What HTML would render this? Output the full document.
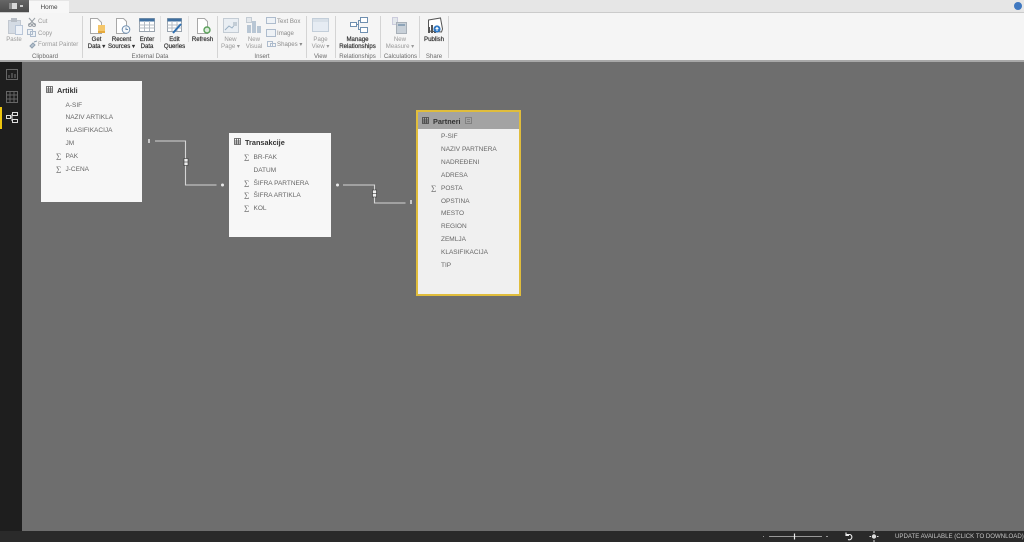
<!DOCTYPE html>
<html><head><meta charset="utf-8">
<style>
html,body{margin:0;padding:0;background:#6e6e6e}
#p{position:relative;width:1024px;height:542px;overflow:hidden;background:#6e6e6e;font-family:"Liberation Sans",sans-serif;filter:blur(.35px)}
#p div{position:absolute}
.t{white-space:nowrap;font-size:6.1px;line-height:7px;color:#555;text-align:center}
.g{color:#9a9a9a}
.b{color:#333;-webkit-text-stroke:.2px #333}
.gl{color:#6a6a6a}
.sep{width:1px;top:16px;height:42px;background:#d4d4d4}
.f{white-space:nowrap;font-size:6.5px;line-height:8px;color:#666;margin-top:1px}
.s{white-space:nowrap;font-family:"Liberation Serif",serif;font-size:9px;line-height:8px;color:#777;margin-top:1px}
.h{white-space:nowrap;font-size:7.3px;line-height:9px;font-weight:bold;color:#333;margin-top:.5px}
svg{position:absolute;overflow:visible}
</style></head><body><div id="p">
<!-- top bar -->
<div style="left:0;top:0;width:1024px;height:13px;background:#e6e6e6"></div>
<div style="left:0;top:12px;width:1024px;height:1px;background:#cbcbcb"></div>
<div style="left:0;top:0;width:29px;height:12px;background:linear-gradient(#666,#4c4c4c)"></div>
<div style="left:9px;top:3px;width:8px;height:6px;background:#d8d8d8"></div>
<div style="left:9px;top:3px;width:3px;height:6px;background:#8a8a8a"></div>
<div style="left:20px;top:5px;width:3px;height:2px;background:#ccc"></div>
<div style="left:29px;top:1px;width:40px;height:12px;background:#f7f7f7"></div>
<div class="t" style="left:29px;top:3.500px;width:40px;color:#444;font-size:6.4px">Home</div>
<div style="left:1014px;top:2px;width:8px;height:8px;border-radius:4px;background:#3f78c0"></div>
<!-- ribbon -->
<div style="left:0;top:13px;width:1024px;height:48px;background:#f5f5f5"></div>
<div style="left:0;top:60px;width:1024px;height:2px;background:#a8a8a8"></div>
<div class="sep" style="left:82px"></div><div class="sep" style="left:217px"></div><div class="sep" style="left:306px"></div><div class="sep" style="left:335px"></div><div class="sep" style="left:380px"></div><div class="sep" style="left:419px"></div><div class="sep" style="left:448px"></div>
<div class="sep" style="left:160px;height:26px;background:#e0e0e0"></div>
<div class="sep" style="left:188px;height:26px;background:#e0e0e0"></div>
<!-- ribbon icons -->
<svg style="left:0;top:0" width="1024" height="62" fill="none" stroke-width="1">
<!-- paste -->
<path d="M8.500 20.500h12v13h-12z" fill="#d4dbe4" stroke="#c2c8d0"/><path d="M11 18h6v4h-6z" fill="#b8bec6"/><path d="M15.500 25.500h7v9h-7z" fill="#eef2f8" stroke="#b9c6d8"/>
<!-- cut, copy, fp -->
<path d="M29 18l6 7M35 18l-6 7" stroke="#9aa0a6"/><circle cx="30" cy="25" r="1.500" stroke="#9aa0a6"/><circle cx="34" cy="25" r="1.500" stroke="#9aa0a6"/>
<path d="M27.500 29.500h5v5h-5zM30.500 31.500h5v5h-5z" stroke="#aebccd" fill="#eef2f6"/>
<path d="M30 46l3-3 2 2-3 3zM34 42l3-1" stroke="#8fa0b0" fill="#b8c4d0"/>
<!-- get data -->
<path d="M90.500 18.500h7l4 4v11h-11z" fill="#fff" stroke="#a8a8a8"/><path d="M98 25h7v8h-7z" fill="#f4c66a"/><path d="M98 31h7v2h-7z" fill="#e6a93c"/>
<!-- recent -->
<path d="M116.500 18.500h7l3 3v12h-10z" fill="#fff" stroke="#a8a8a8"/><circle cx="126" cy="29.500" r="3.800" fill="#f6f9fc" stroke="#6f8fb0"/><path d="M126 27.500v2h2" stroke="#6f8fb0"/>
<!-- enter -->
<path d="M139.500 18.500h15v13h-15z" fill="#fff" stroke="#9aa4ae"/><path d="M139.500 18.500h15v3h-15z" fill="#3f6fa0"/><path d="M139.500 25h15M139.500 28h15M144.500 21v10M149.500 21v10" stroke="#b5bcc4"/>
<!-- edit -->
<path d="M167.500 18.500h14v13h-14z" fill="#fff" stroke="#9aa4ae"/><path d="M167.500 18.500h14v3h-14z" fill="#3f6fa0"/><path d="M167.500 25h14M167.500 28h14M172 21v10M177 21v10" stroke="#b5bcc4"/><path d="M173 33l8-9" stroke="#2f6fb0" stroke-width="2"/>
<!-- refresh -->
<path d="M197.500 18.500h7l3 3v12h-10z" fill="#fff" stroke="#a8a8a8"/><circle cx="207" cy="30" r="3" stroke="#5aa05a" fill="#dcecdc" stroke-width="1.400"/>
<!-- new page -->
<path d="M223.500 18.500h15v14h-15z" fill="#e9eef3" stroke="#c4ccd4"/><path d="M225 30l4-4 3 2 4-5" stroke="#9ab0c4"/><path d="M233 22h4v4h-4z" fill="#c3cdd6"/>
<!-- new visual -->
<path d="M246.500 17.500h5v5h-5z" fill="#e4e8ec" stroke="#c4ccd4"/><path d="M247 25h4v8h-4zM252 21h4v12h-4zM257 26h4v7h-4z" fill="#b8c6d4"/>
<!-- textbox image shapes -->
<path d="M266.500 17.500h9v6h-9z" fill="#eef2f6" stroke="#aebccd"/><path d="M266.500 29.500h9v7h-9z" fill="#eef2f6" stroke="#aebccd"/><path d="M267.500 41.500h5v5h-5zM270.500 43.500h5v3h-5z" stroke="#aebccd"/>
<!-- page view -->
<path d="M312.500 18.500h16v13h-16z" fill="#e6ecf3" stroke="#c3ced9"/><path d="M313 19h15v3h-15z" fill="#d8e0e8"/>
<!-- manage rel -->
<path d="M350.500 22.500h6v4h-6zM360.500 17.500h7v5h-7zM360.500 27.500h7v5h-7z" fill="#fff" stroke="#6f8fb0"/><path d="M356.500 24.500h2v-4h2M358.500 24.500v5h2" stroke="#6f8fb0"/>
<!-- new measure -->
<path d="M392.500 17.500h5v7h-5z" fill="#e4e8ec" stroke="#ccd"/><path d="M396.500 22.500h10v11h-10z" fill="#c8d0d8" stroke="#a8b0b8"/><path d="M398 24h7v2h-7z" fill="#8ea4b8"/>
<!-- publish -->
<path d="M428.500 20l12-2 2 11-1 3-13-1z" fill="#fff" stroke="#555"/><path d="M428 27h2v6h-2zM431 25h2v8h-2zM434 27h2v6h-2z" fill="#555"/><circle cx="437" cy="29" r="3.600" fill="#2f78c4"/><path d="M437 31v-3M435.600 29l1.400-1.500 1.400 1.500" stroke="#fff"/>
</svg>
<!-- ribbon text -->
<div class="t g" style="left:2px;top:35.500px;width:24px">Paste</div>
<div class="t g" style="left:38px;top:17.500px">Cut</div>
<div class="t g" style="left:38px;top:29.500px">Copy</div>
<div class="t g" style="left:38px;top:41px">Format Painter</div>
<div class="t gl" style="left:20px;top:53px;width:50px">Clipboard</div>
<div class="t b" style="left:86px;top:35.500px;width:21px">Get<br>Data ▾</div>
<div class="t b" style="left:107px;top:35.500px;width:29px">Recent<br>Sources ▾</div>
<div class="t b" style="left:136px;top:35.500px;width:22px">Enter<br>Data</div>
<div class="t b" style="left:163px;top:35.500px;width:23px">Edit<br>Queries</div>
<div class="t b" style="left:190px;top:35.500px;width:25px">Refresh</div>
<div class="t gl" style="left:120px;top:53px;width:60px">External Data</div>
<div class="t g" style="left:220px;top:35.500px;width:21px">New<br>Page ▾</div>
<div class="t g" style="left:243px;top:35.500px;width:22px">New<br>Visual</div>
<div class="t g" style="left:277px;top:17.500px;color:#8a8a8a">Text Box</div>
<div class="t g" style="left:277px;top:29.500px;color:#8a8a8a">Image</div>
<div class="t g" style="left:277px;top:41px;color:#8a8a8a">Shapes ▾</div>
<div class="t gl" style="left:247px;top:53px;width:30px">Insert</div>
<div class="t g" style="left:309px;top:35.500px;width:23px">Page<br>View ▾</div>
<div class="t gl" style="left:309px;top:53px;width:23px">View</div>
<div class="t b" style="left:337px;top:35.500px;width:41px">Manage<br>Relationships</div>
<div class="t gl" style="left:337px;top:53px;width:41px">Relationships</div>
<div class="t g" style="left:385px;top:35.500px;width:30px">New<br>Measure ▾</div>
<div class="t gl" style="left:383px;top:53px;width:35px">Calculations</div>
<div class="t b" style="left:421px;top:35.500px;width:26px">Publish</div>
<div class="t gl" style="left:421px;top:53px;width:26px">Share</div>
<!-- sidebar -->
<div style="left:0;top:62px;width:22px;height:469px;background:#1e1e1e"></div>
<div style="left:0;top:107px;width:2px;height:22px;background:#eec60e"></div>
<svg style="left:0;top:62px" width="22" height="70" fill="none">
<path d="M6.500 7.500h11v10h-11z" stroke="#666"/><path d="M9 16v-3M12 16v-5M15 16v-4" stroke="#777"/>
<path d="M6.500 29.500h11v11h-11zM6.500 33h11M6.500 37h11M10 29.500v11M14 29.500v11" stroke="#666"/>
<path d="M6.500 53.500h4v3h-4zM12.500 50.500h5v3h-5zM12.500 57.500h5v3h-5zM10.500 55h2M12 52v7" stroke="#ddd"/>
</svg>
<!-- Artikli -->
<div style="left:41px;top:81px;width:101px;height:121px;background:#f7f7f7"></div>
<svg style="left:46px;top:86px" width="8" height="7" fill="none" stroke="#555" stroke-width=".8"><path d="M.5.5h6v6h-6zM.5 3h6M.5 5h6M2.500.5v6M4.500.5v6"/></svg>
<div class="h" style="left:57px;top:85px">Artikli</div>
<div class="f" style="left:65.500px;top:100.500px">A-SIF</div>
<div class="f" style="left:65.500px;top:113px">NAZIV ARTIKLA</div>
<div class="f" style="left:65.500px;top:126px">KLASIFIKACIJA</div>
<div class="f" style="left:65.500px;top:139px">JM</div>
<div class="f" style="left:65.500px;top:152px">PAK</div>
<div class="f" style="left:65.500px;top:164.500px">J-CENA</div>
<div class="s" style="left:56px;top:152px">Σ</div>
<div class="s" style="left:56px;top:164.500px">Σ</div>
<!-- Transakcije -->
<div style="left:229px;top:133px;width:102px;height:104px;background:#f7f7f7"></div>
<svg style="left:234px;top:138px" width="8" height="7" fill="none" stroke="#555" stroke-width=".8"><path d="M.5.5h6v6h-6zM.5 3h6M.5 5h6M2.500.5v6M4.500.5v6"/></svg>
<div class="h" style="left:245px;top:137px">Transakcije</div>
<div class="f" style="left:253.500px;top:153px">BR-FAK</div>
<div class="f" style="left:253.500px;top:165.500px">DATUM</div>
<div class="f" style="left:253.500px;top:178.500px">ŠIFRA PARTNERA</div>
<div class="f" style="left:253.500px;top:191px">ŠIFRA ARTIKLA</div>
<div class="f" style="left:253.500px;top:204px">KOL</div>
<div class="s" style="left:244px;top:153px">Σ</div>
<div class="s" style="left:244px;top:178.500px">Σ</div>
<div class="s" style="left:244px;top:191px">Σ</div>
<div class="s" style="left:244px;top:204px">Σ</div>
<!-- Partneri -->
<div style="left:416px;top:110px;width:101px;height:182px;border:2px solid #e0bd3c;background:#f0f0f0"></div>
<div style="left:418px;top:112px;width:101px;height:17px;background:#a3a3a3"></div>
<svg style="left:422px;top:117px" width="8" height="7" fill="none" stroke="#444" stroke-width=".8"><path d="M.5.5h6v6h-6zM.5 3h6M.5 5h6M2.500.5v6M4.500.5v6"/></svg>
<div class="h" style="left:433px;top:116px">Partneri</div>
<svg style="left:465px;top:117px" width="8" height="7" fill="none" stroke="#777" stroke-width=".8"><path d="M.5.5h6v6h-6zM2 2.500h3M2 4.500h3"/></svg>
<div class="f" style="left:441px;top:132px">P-SIF</div>
<div class="f" style="left:441px;top:145px">NAZIV PARTNERA</div>
<div class="f" style="left:441px;top:158px">NADREĐENI</div>
<div class="f" style="left:441px;top:171px">ADRESA</div>
<div class="f" style="left:441px;top:183.500px">POSTA</div>
<div class="s" style="left:431px;top:183.500px">Σ</div>
<div class="f" style="left:441px;top:196.500px">OPSTINA</div>
<div class="f" style="left:441px;top:209px">MESTO</div>
<div class="f" style="left:441px;top:222px">REGION</div>
<div class="f" style="left:441px;top:235px">ZEMLJA</div>
<div class="f" style="left:441px;top:248px">KLASIFIKACIJA</div>
<div class="f" style="left:441px;top:261px">TIP</div>
<!-- relationships -->
<svg style="left:0;top:0" width="1024" height="542" fill="none">
<path d="M155 141h30.500v44h31" stroke="#d4d4d4" stroke-width="1.100"/>
<path d="M343 185h31.500v18h31" stroke="#d4d4d4" stroke-width="1.100"/>
<rect x="184" y="158.500" width="4" height="7" fill="#eee" stroke="#333" stroke-width=".6"/><path d="M184 162h4" stroke="#333" stroke-width=".6"/>
<rect x="372.500" y="190" width="4" height="7" fill="#eee" stroke="#333" stroke-width=".6"/><path d="M372.500 193.500h4" stroke="#333" stroke-width=".6"/>
<path d="M149 139v4" stroke="#eee" stroke-width="1.400"/><path d="M411 200v4" stroke="#eee" stroke-width="1.400"/>
<circle cx="222.500" cy="185" r="1.500" fill="#e8e8e8"/><circle cx="337.500" cy="185" r="1.500" fill="#e8e8e8"/>
</svg>
<!-- status bar -->
<div style="left:0;top:531px;width:1024px;height:11px;background:#2a2a2a"></div>
<svg style="left:0;top:531px" width="1024" height="11" fill="none">
<path d="M763 5.500h1M769 5.500h53M826 5.500h2" stroke="#999"/><path d="M794.500 2.500v6" stroke="#eee" stroke-width="1.200"/>
<path d="M846 3.500h4a2.700 2.700 0 1 1-2 5M846 1.500v3h3" stroke="#eee" stroke-width="1.100"/>
<circle cx="874" cy="5.500" r="2.200" fill="#ddd"/><path d="M874 0v2M874 9v2M869.500 5.500h1.500M877 5.500h1.500" stroke="#ddd"/>
</svg>
<div style="left:895px;top:533px;font-size:6.1px;line-height:8px;white-space:nowrap;color:#c4c4c4">UPDATE AVAILABLE (CLICK TO DOWNLOAD)</div>
</div></body></html>
